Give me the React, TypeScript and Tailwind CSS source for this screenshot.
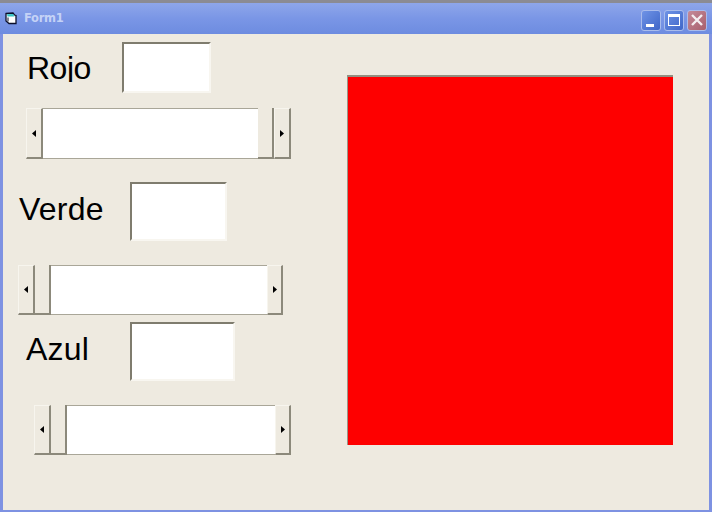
const arial = 'font-["Liberation_Sans",Arial,sans-serif]';

function FormIcon() {
  return (
    <svg width="12" height="13" viewBox="0 0 12 13" className="ml-[5px]">
      <path d="M1 1.5 L8 1 L9.5 3 L11 3.5 L11 11.5 L4 11.5 L1 9 Z" fill="#fff" stroke="#0b0f2a" strokeWidth="1.3" />
      <path d="M2 2.2 L8 2 L9.5 4.6 L2.5 4.6 Z" fill="#35c4c4" />
      <path d="M3 5.5 L3 9.5" stroke="#0b0f2a" strokeWidth="1" />
    </svg>
  );
}

function TitleButton({ kind }: { kind: 'min' | 'max' | 'close' }) {
  const bg =
    kind === 'close'
      ? 'bg-gradient-to-br from-[#c48a98] to-[#a8606e]'
      : 'bg-gradient-to-br from-[#6f93e6] to-[#3f66c8]';
  return (
    <div className={`${bg} relative w-[20px] h-[21px] rounded-[3px] border border-[#a9bcec] flex items-center justify-center`}>
      {kind === 'min' && <div className="absolute left-[4px] bottom-[3px] w-[8px] h-[3px] bg-white" />}
      {kind === 'max' && (
        <div className="w-[12px] h-[12px] border border-white border-t-[3px]" />
      )}
      {kind === 'close' && (
        <svg width="14" height="14" viewBox="0 0 14 14">
          <path d="M2 2 L12 12 M12 2 L2 12" stroke="#f4eef0" strokeWidth="2.4" />
        </svg>
      )}
    </div>
  );
}

function ArrowButton({ dir, width = 'w-[16px]' }: { dir: 'left' | 'right'; width?: string }) {
  return (
    <div className={`${width} h-full bg-[#eeeae0] border-t border-l border-t-[#f7f5ee] border-l-[#f7f5ee] border-r-2 border-b-2 border-r-[#8c897b] border-b-[#8c897b] flex items-center justify-center`}>
      <svg width="4" height="7" viewBox="0 0 4 7">
        <path d={dir === 'left' ? 'M4 0 L0 3.5 L4 7 Z' : 'M0 0 L4 3.5 L0 7 Z'} fill="#000" />
      </svg>
    </div>
  );
}

function Thumb() {
  return <div className="w-[16px] h-full bg-[#eeeae0] border-r-2 border-b-2 border-r-[#8c897b] border-b-[#8c897b]" />;
}

function Track({ width }: { width: string }) {
  return <div className={`${width} h-full bg-white border-t border-t-[#a9a698] border-b border-b-[#a9a698]`} />;
}

function TextBox({ size }: { size: string }) {
  return <div className={`${size} bg-white border-t-2 border-l-2 border-t-[#7f7c6e] border-l-[#7f7c6e] border-r-2 border-b-2 border-r-[#f8f6f0] border-b-[#f8f6f0]`} />;
}

export default function App() {
  return (
    <div className={`${arial} w-[712px] h-[512px] flex flex-col overflow-hidden bg-[#7e92e2]`}>
      {/* Title bar */}
      <div className="h-[3px] bg-[#8b8b93]" />
      <div className="h-[31px] flex items-center pr-[5px] bg-gradient-to-b from-[#8ea6ea] via-[#7a96e6] to-[#6d8ce0]">
        <FormIcon />
        <span className='ml-[7px] text-[11.5px] font-bold text-[#c4d2f6] font-["DejaVu_Sans",sans-serif] tracking-[-0.3px]'>Form1</span>
        <div className="ml-auto flex gap-[3px] pt-[3px]">
          <TitleButton kind="min" />
          <TitleButton kind="max" />
          <TitleButton kind="close" />
        </div>
      </div>

      {/* Form body */}
      <div className="flex-1 ml-[3px] mr-[3px] mb-[2px] bg-[#eeeae0] flex">
        <div className="w-[344px] shrink-0 flex flex-col">
          <div className="mt-[8px] ml-[24px] flex items-center">
            <div className="w-[95px] h-[51px] flex items-center pb-[3px] text-[32px] leading-[36px] tracking-[-0.5px] text-black">
              <span className="h-[32px] overflow-hidden block">Rojo</span>
            </div>
            <TextBox size="w-[89px] h-[51px]" />
          </div>
          <div className="mt-[15px] ml-[23px] h-[51px] flex">
            <ArrowButton dir="left" width="w-[17px]" />
            <Track width="w-[215px]" />
            <Thumb />
            <ArrowButton dir="right" width="w-[17px]" />
          </div>

          <div className="mt-[23px] ml-[16px] flex items-center">
            <div className="w-[111px] h-[59px] flex items-center pb-[5px] text-[32px] leading-[36px] tracking-[0.2px] text-black">Verde</div>
            <TextBox size="w-[97px] h-[59px]" />
          </div>
          <div className="mt-[24px] ml-[15px] h-[50px] flex">
            <ArrowButton dir="left" width="w-[17px]" />
            <Thumb />
            <Track width="w-[216px]" />
            <ArrowButton dir="right" />
          </div>

          <div className="mt-[7px] ml-[23px] flex items-center">
            <div className="w-[104px] h-[59px] flex items-center pb-[5px] text-[32px] leading-[36px] tracking-[0.2px] text-black">Azul</div>
            <TextBox size="w-[105px] h-[59px]" />
          </div>
          <div className="mt-[24px] ml-[31px] h-[50px] flex">
            <ArrowButton dir="left" width="w-[17px]" />
            <Thumb />
            <Track width="w-[208px]" />
            <ArrowButton dir="right" />
          </div>
        </div>

        {/* Colour preview */}
        <div className="mt-[41px] w-[326px] h-[370px] bg-[#fe0000] border-t-2 border-l border-t-[#938f80] border-l-[#9a9688]" />
      </div>
    </div>
  );
}
